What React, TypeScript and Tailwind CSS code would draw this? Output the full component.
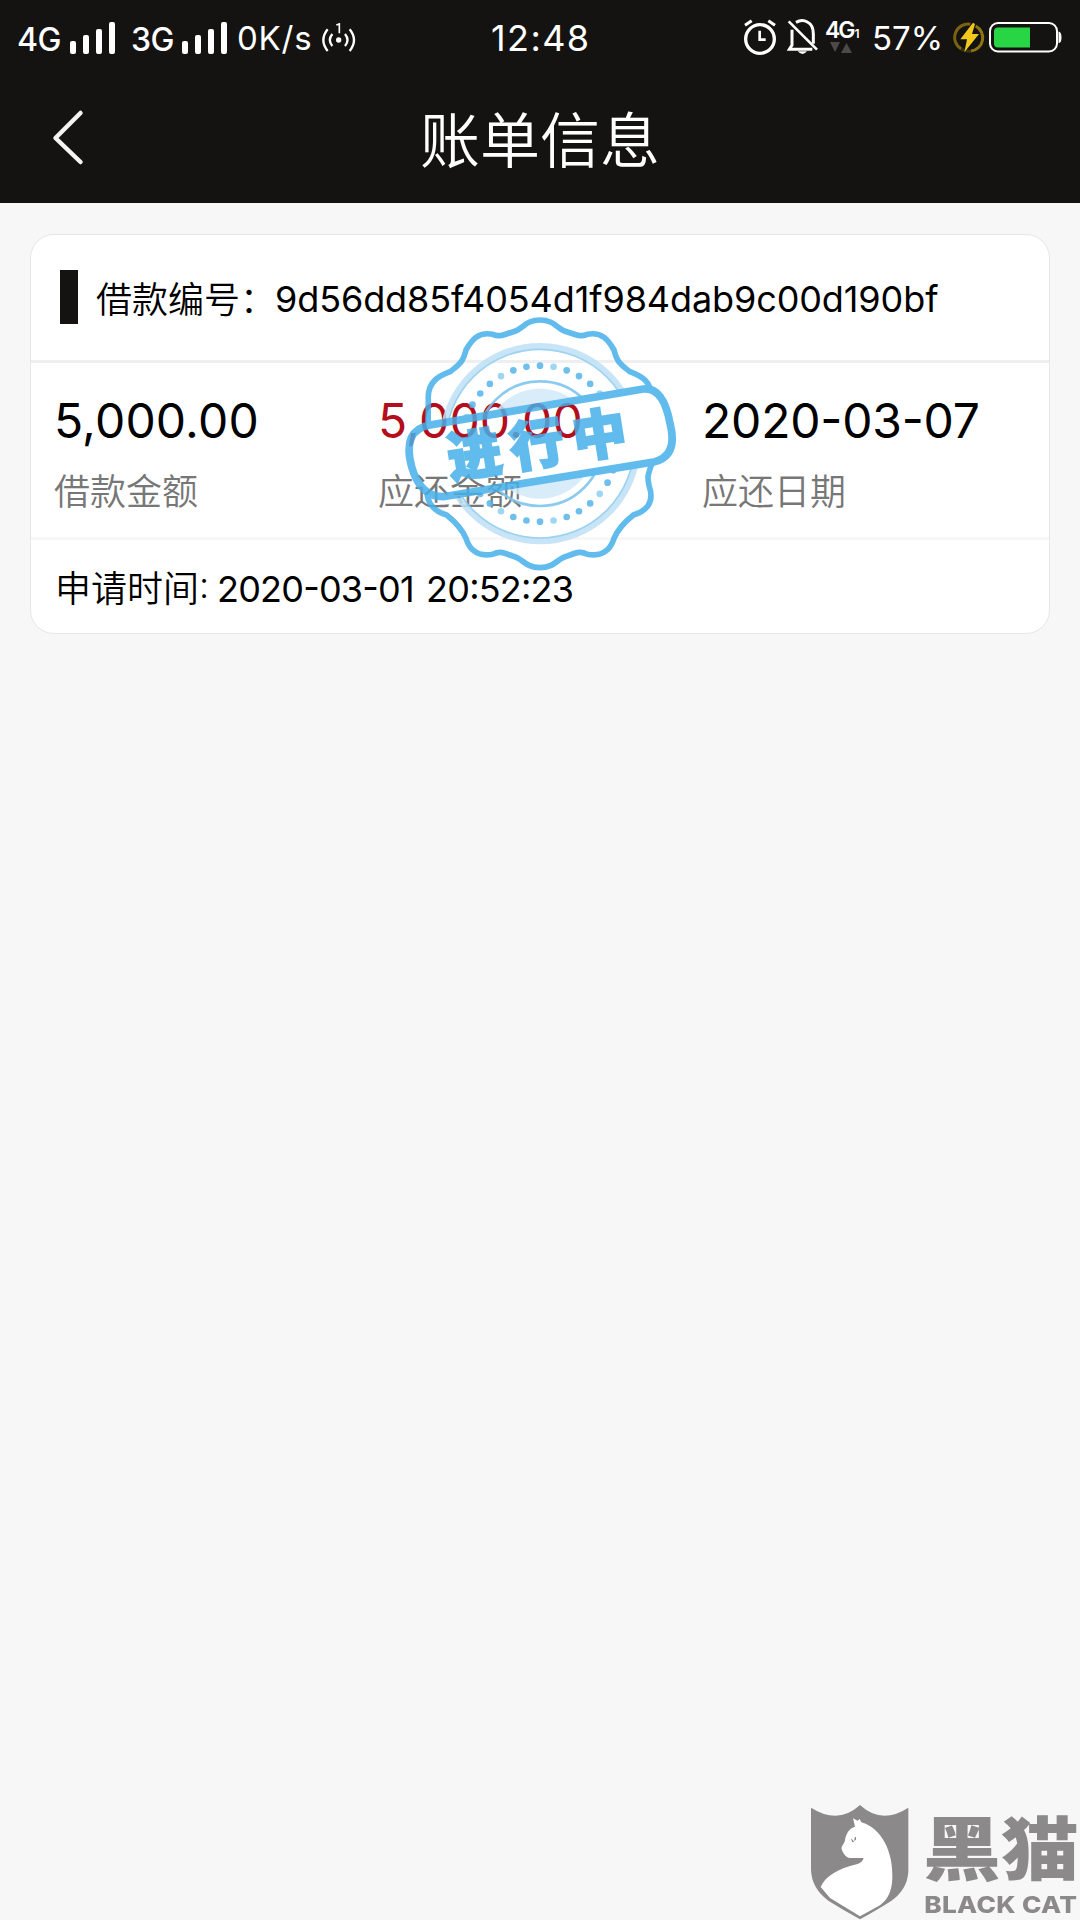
import React from 'react';

const bill = {
  id: '9d56dd85f4054d1f984dab9c00d190bf',
  appliedAt: '2020-03-01 20:52:23',
  columns: [
    { value: '5,000.00', label: '借款金额', style: 'text-black tracking-[0.2px]' },
    { value: '5,000.00', label: '应还金额', style: 'text-[#b40d1c] tracking-[0.2px]' },
    { value: '2020-03-07', label: '应还日期', style: 'text-black tracking-[-0.2px]' },
  ],
};

const dots = Array.from({ length: 36 }, (_, i) => {
  const a = (i * 10 * Math.PI) / 180;
  return { x: 480 + 234 * Math.sin(a), y: 431 - 234 * Math.cos(a), pale: i % 4 === 1 };
});

function SignalBars() {
  return (
    <div className="flex items-end gap-[7px]">
      <span className="h-[13px] w-[6px] rounded-[2px] bg-white" />
      <span className="h-[19px] w-[6px] rounded-[2px] bg-white" />
      <span className="h-[25px] w-[6px] rounded-[2px] bg-white" />
      <span className="h-[32px] w-[6px] rounded-[2px] bg-white" />
    </div>
  );
}

function HotspotIcon() {
  return (
    <svg width="34" height="32" viewBox="0 0 102 96" fill="none" stroke="#fff" strokeWidth="7">
      <circle cx="50" cy="54" r="8" fill="#fff" stroke="none" />
      <path d="M31 36Q16 54 31 72M69 36Q84 54 69 72" />
      <path d="M17 22Q-9 54 17 87M83 22Q109 54 83 87" />
      <path d="M43 9L52 6V34" strokeWidth="5" />
    </svg>
  );
}

function AlarmIcon() {
  return (
    <svg width="34" height="38" viewBox="0 0 102 114" fill="none" stroke="#fff" strokeWidth="10">
      <circle cx="51" cy="60" r="43" />
      <path d="M50 35V62H68" strokeWidth="8" />
      <path d="M6 19L26 5M96 19L76 5" strokeWidth="9" />
    </svg>
  );
}

function BellOffIcon() {
  return (
    <svg width="32" height="38" viewBox="0 0 96 114" fill="none" stroke="#fff" strokeWidth="9">
      <path d="M27 10Q45 0 61 9Q79 18 79 44V74" />
      <path d="M15 32V78L7 91H76" />
      <path d="M5 7L90 92" strokeWidth="8" />
      <path d="M32 97H60Q47 113 32 97Z" fill="#fff" stroke="none" />
    </svg>
  );
}

function ChargeIcon() {
  return (
    <svg width="32" height="32" viewBox="0 0 96 96">
      <path d="M52 7A40 40 0 0 0 25 81" fill="none" stroke="#7a6212" strokeWidth="9" />
      <path d="M68 12A40 40 0 0 1 54 87" fill="none" stroke="#8f7414" strokeWidth="9" />
      <path d="M25 81A40 40 0 0 0 54 87" fill="none" stroke="#3b3212" strokeWidth="9" />
      <path d="M60 2L22 52H42L34 91L78 36H57L66 6Z" fill="#f3c81c" />
    </svg>
  );
}

function BatteryIcon() {
  return (
    <svg width="74" height="32" viewBox="0 0 74 32">
      <rect x="1" y="1" width="67" height="28.500" rx="8" fill="none" stroke="#fff" strokeWidth="2" />
      <path d="M9 5.500H41V25.500H9Q5 25.500 5 21.500V9.500Q5 5.500 9 5.500Z" fill="#27d545" />
      <path d="M69.500 9.500Q72.500 10 72.500 15.500T69.500 21Z" fill="#fff" />
    </svg>
  );
}

function StatusBar() {
  return (
    <div className="flex h-[75px] items-center pl-[17px] pr-[17px] font-normal text-white">
      <div className="flex w-[474px] items-center">
        <span className="w-[53px] pt-[4px] text-[32px] leading-[36px] font-medium tracking-[-0.5px]">4G</span>
        <SignalBars />
        <span className="ml-[16px] w-[51px] pt-[4px] text-[32px] leading-[36px] font-medium tracking-[-0.5px]">3G</span>
        <SignalBars />
        <span className="ml-[10px] w-[85px] text-[33px] leading-[36px] tracking-[0.8px]">0K/s</span>
        <HotspotIcon />
      </div>
      <span className="text-[36px] leading-[36px] tracking-[1.4px]">12:48</span>
      <div className="ml-auto flex items-center">
        <AlarmIcon />
        <div className="ml-[10px] flex">
          <BellOffIcon />
        </div>
        <div className="ml-[6px] flex h-[38px] w-[47px] flex-col">
          <div className="flex items-end text-[23px] leading-[22px] font-semibold tracking-[-2px]">
            4G<span className="ml-[1px] text-[12px] leading-[15px]">1</span>
          </div>
          <svg className="ml-[5px] mt-[1px]" width="22" height="11" viewBox="0 0 22 11" fill="#4a4a48">
            <path d="M0 0H10L5 10ZM11 11L16.500 1L22 11Z" />
          </svg>
        </div>
        <span className="w-[81px] text-[33px] leading-[36px]">57%</span>
        <ChargeIcon />
        <div className="ml-[4px] flex">
          <BatteryIcon />
        </div>
      </div>
    </div>
  );
}

function TitleBar() {
  return (
    <div className="grid h-[128px] grid-cols-3 items-center text-white">
      <svg className="ml-[49px]" width="36" height="60" viewBox="0 0 36 60" fill="none">
        <path d="M31.500 4L6.500 29L31.500 53" stroke="#f4f4f4" strokeWidth="4.500" strokeLinecap="round" strokeLinejoin="round" />
      </svg>
      <h1 className="pt-[3px] text-center text-[60px] leading-[60px] font-[350] whitespace-nowrap">账单信息</h1>
    </div>
  );
}

function Stamp() {
  return (
    <svg
      className="absolute left-[349px] top-[65px] opacity-85"
      width="320"
      height="290"
      viewBox="0 0 960 870"
      fill="none"
      stroke="#46b0ea"
    >
      <defs>
        <mask id="outside-band">
          <rect width="960" height="870" fill="#fff" />
          <path d="M150 375L790 267Q850 260 870 370Q895 465 825 485L190 590Q120 590 95 500Q65 390 150 375Z" fill="#000" />
        </mask>
      </defs>
      <g mask="url(#outside-band)">
        <path
          d="M480 60C525 60 530 88 562 96C590 104 600 112 622 103C665 94 685 120 702 150C712 190 725 195 748 214C765 222 820 235 814 300L820 480C800 530 802 535 808 560C825 610 795 635 760 645C735 665 715 685 702 715C690 755 660 770 622 763C600 752 590 758 562 768C530 776 525 803 480 803C435 803 430 776 398 768C370 758 360 752 338 763C300 770 270 755 258 715C245 685 225 665 200 645C165 635 135 610 142 560L145 300C140 235 195 222 212 214C235 195 248 190 258 150C275 120 295 94 338 103C360 112 370 104 398 96C430 88 435 60 480 60Z"
          strokeWidth="17"
        />
        <circle cx="480" cy="431" r="292" stroke="#bfe1f7" strokeWidth="20" />
        <circle cx="480" cy="431" r="283" stroke="#8ecbef" strokeWidth="5" />
        <circle cx="480" cy="431" r="187" stroke="#79c3ee" strokeWidth="8" />
        <circle cx="480" cy="431" r="165" fill="#d3e9fa" stroke="none" />
        {dots.map((dot, i) => (
          <circle key={i} cx={dot.x} cy={dot.y} r="10" fill={dot.pale ? '#8fd0f3' : '#56b4ea'} stroke="none" />
        ))}
      </g>
      <path
        d="M150 375L790 267Q850 260 870 370Q895 465 825 485L190 590Q120 590 95 500Q65 390 150 375Z"
        strokeWidth="23"
        strokeLinejoin="round"
      />
      <text
        x="212"
        y="534"
        transform="rotate(-9 212 534)"
        className="font-['Noto_Sans_CJK_SC',sans-serif] text-[162px] font-black tracking-[28px]"
        fill="#46b0ea"
        strokeWidth="7"
      >
        进行中
      </text>
    </svg>
  );
}

function BillCard() {
  return (
    <div className="relative mx-[30px] mt-[31px] h-[400px] rounded-[24px] border border-[#e6e6e6] bg-white text-black [font-feature-settings:'case']">
      <div className="flex h-[128px] items-center border-b-[3px] border-[#efefef] pl-[29px] text-[36px] leading-[40px]">
        <span className="mb-[1px] h-[54px] w-[18px] bg-[#141311]" />
        <span className="ml-[18px] w-[179px] pt-[4px] whitespace-nowrap">借款编号：</span>
        <span className="pt-[3px] font-normal tracking-[-0.1px]">{bill.id}</span>
      </div>
      <div className="flex h-[177px] border-b-[3px] border-[#f7f7f7] pl-[23px] pt-[34px]">
        {bill.columns.map((col) => (
          <div key={col.label} className="w-[324px]">
            <div className={`text-[48px] leading-[48px] font-normal ${col.style}`}>{col.value}</div>
            <div className="mt-[29px] text-[36px] leading-[36px] text-[#777]">{col.label}</div>
          </div>
        ))}
      </div>
      <div className="flex pl-[24px] pt-[29px] text-[36px] leading-[40px]">
        <span className="w-[162px] whitespace-nowrap">申请时间:</span>
        <span className="font-normal tracking-[-0.8px] [word-spacing:3px]">{bill.appliedAt}</span>
      </div>
      <Stamp />
    </div>
  );
}

function Watermark() {
  return (
    <div className="absolute bottom-0 right-0 flex h-[125px] w-[280px] text-[#8b8989]">
      <svg width="120" height="125" viewBox="0 0 360 375">
        <path d="M33 38Q115 90 180 30Q245 90 325 38V230Q322 285 270 320Q230 345 180 373Q130 345 85 317Q35 280 33 225Z" fill="currentColor" />
        <path
          d="M159 70L173 77L179 72L184 82C245 100 280 170 277 250C276 290 262 315 240 331L180 364L90 309L62 276C75 245 115 220 170 208Q187 203 191 189H150C140 188 130 178 126 165C120 155 135 145 135 135C138 115 148 100 165 95Z"
          fill="#fff"
        />
        <path d="M152 129L163 140L157 142ZM164 127L168 126L168 134L163 138Z" fill="currentColor" />
      </svg>
      <div className="w-[160px] pl-[3px] pt-[17px] font-black">
        <div className="origin-left scale-x-[1.13] text-[69px] leading-[76px] whitespace-nowrap">黑猫</div>
        <div className="origin-left scale-x-[1.14] pl-[1px] text-[23px] leading-[34px] font-extrabold tracking-[0.3px] whitespace-nowrap">
          BLACK CAT
        </div>
      </div>
    </div>
  );
}

export default function App() {
  return (
    <div className="relative h-[1920px] w-[1080px] overflow-hidden bg-[#f7f7f7] font-['Inter','Noto_Sans_CJK_SC',sans-serif] font-[350]">
      <header className="bg-[#141311]">
        <StatusBar />
        <TitleBar />
      </header>
      <BillCard />
      <Watermark />
    </div>
  );
}
